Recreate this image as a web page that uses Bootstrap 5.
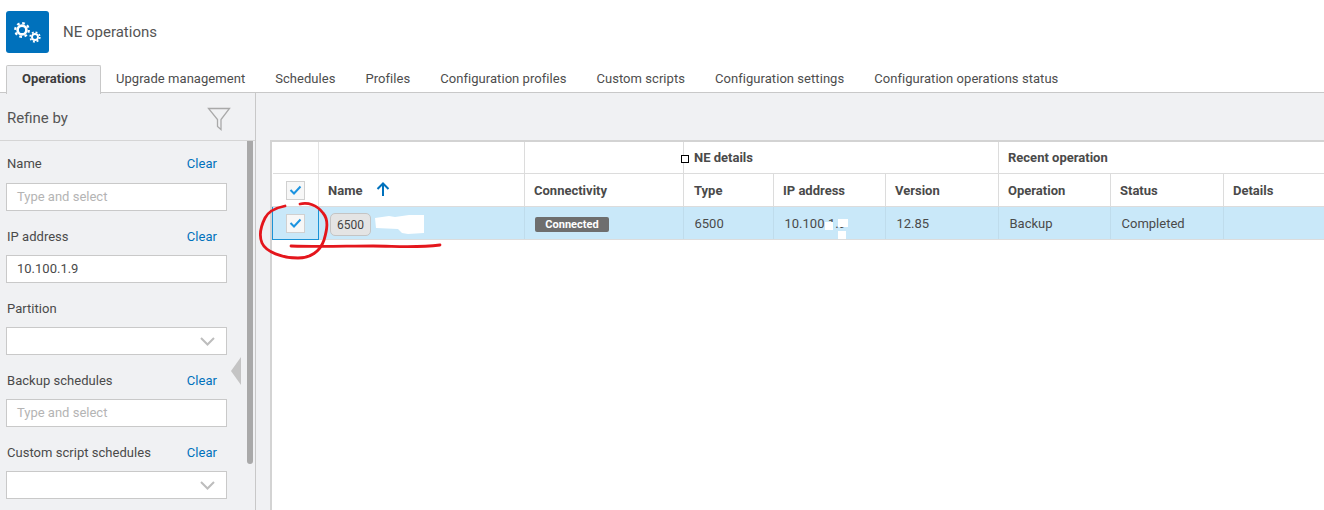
<!DOCTYPE html>
<html lang="en"><head><meta charset="utf-8"><title>NE operations</title>
<link href="https://cdn.jsdelivr.net/npm/bootstrap@5.3.0/dist/css/bootstrap.min.css" rel="stylesheet">
<style>
html,body{height:510px;overflow:hidden}
body{font-family:Roboto,"Liberation Sans",sans-serif;font-size:13px;color:#4a4a4a;background:#fff;position:relative}
.app-head{height:65px;padding:0 6px}
.app-logo{width:43px;height:42px;margin-bottom:1px;background:#0071bc;border-radius:3px}
.app-title{font-size:15px;margin-left:14px;color:#555}
.app-tabs{height:28px;border-bottom:1px solid #c8c8c8;padding-left:6px}
.app-tabs .nav-link{padding:0 14px;height:28px;line-height:25px;color:#4d4d4d;font-size:13px;border:1px solid transparent;border-bottom:0;border-radius:2px 2px 0 0;margin:0;letter-spacing:.05px;background:none}
.app-tabs .nav-link.active{font-weight:700;color:#3c3c3c;background:#f0f1f3;border-color:#c8c8c8;height:29px;padding:0 14px 0 15px;letter-spacing:0}
.app-body{height:417px;background:#f0f1f3}
.side{width:256px;border-right:1px solid #c8c8c8;position:relative;height:417px;overflow:hidden}
.side-head{height:48px;border-bottom:1px solid #d5d5d5;padding:4px 24px 0 7px;font-size:15px;color:#555}
.fgroup{padding:0 28px 0 6px;height:72px}
.fgroup-top{height:30px;padding-left:1px;padding-top:2px;letter-spacing:.03px}
.fgroup a{color:#0071bc;text-decoration:none;margin-right:10px}
.fgroup-first .fgroup-top{padding-top:1px}
.fbox{height:28px;background:#fff;border:1px solid #c9c9c9;padding:0 10px;line-height:26px;color:#4a4a4a;display:flex;align-items:center;justify-content:space-between}
.fbox.ph{color:#b4b4b4}
.fbox svg{margin-right:1px}
.side-list{padding-top:12px}
.side-scroll{position:absolute;left:247px;top:48px;width:6px;height:323px;background:#a9a9a9;border-radius:0 0 3px 3px}
.side-tri{position:absolute;left:231px;top:264px;width:0;height:0;border-style:solid;border-width:14px 10px 14px 0;border-color:transparent #c4c4c4 transparent transparent}
.main{padding:47px 0 0 15px;overflow:hidden}
.grid-wrap{background:#fff;height:370px;border-left:2px solid #d3d3d3;border-top:2px solid #d3d3d3;overflow:hidden;margin-left:-1px}
.ne-table{table-layout:fixed;width:1060px;margin:0;border-collapse:collapse;color:#4a4a4a;font-size:13px}
.ne-table col:nth-child(1){width:46px}.ne-table col:nth-child(2){width:206px}.ne-table col:nth-child(3){width:159px}.ne-table col:nth-child(4){width:90px}.ne-table col:nth-child(5){width:112px}.ne-table col:nth-child(6){width:113px}.ne-table col:nth-child(7){width:112px}.ne-table col:nth-child(8){width:113px}.ne-table col:nth-child(9){width:109px}
.ne-table td,.ne-table th{padding:2px 0 0 9px;border:0;border-right:1px solid #dcdcdc;border-bottom:1px solid #dcdcdc;background:transparent;vertical-align:middle;height:33px;white-space:nowrap;font-weight:700;color:#4a4a4a}
.ne-table th.cfirst{padding-left:10px}
.ne-table thead tr:first-child th{height:31px;padding-top:0}
.ne-table tbody td{font-weight:400;background:#c9e8f9;border-right-color:#bfdcec;border-bottom-color:#dcdcdc;padding-left:10.5px}
.ne-table .cchk,.ne-table tbody .cchk{padding:0;text-align:center;border-right-color:#e3e3e3}
.ne-table tbody .cchk{border:1px solid #1c93d6}
.ne-table tbody .csep{border-left:1px solid #7a8a96}
.chk{display:inline-flex;width:19px;height:19px;background:#f7f7f7;border:1px solid #d0d0d0;align-items:center;justify-content:center;vertical-align:middle}
.ne-chip{display:inline-block;background:#e4e4e4;border:1px solid #c4c4c4;border-radius:5px;height:23px;line-height:22px;width:41px;text-align:center;font-size:12px;margin-left:.5px;margin-top:2px;color:#444}
.ne-status{display:inline-block;background:#6e6e6e;color:#fff;font-weight:700;font-size:11px;height:15px;line-height:15px;width:74px;margin-left:-.5px;text-align:center;border-radius:2px}
.arrow-up{margin-left:10px;vertical-align:-1px}
.sq-mark{position:absolute;left:681px;top:155px;width:8px;height:8px;border:1px solid #000;background:#fff}
.mask{position:absolute;background:#fff}
.mask-a{left:825px;top:222px;width:8px;height:8px}
.mask-b{left:838px;top:219px;width:10px;height:8px}
.mask-c{left:838px;top:231px;width:8px;height:8px}
.ink{position:absolute;left:0;top:0;pointer-events:none}
</style></head><body>
<div class="app-head d-flex align-items-center">
 <div class="app-logo d-flex align-items-center justify-content-center flex-shrink-0">
  <svg width="43" height="42" viewBox="0 0 43 42" fill="none" stroke="#fff"><circle cx="16" cy="19" r="4.4" stroke-width="2.6"/><circle cx="16" cy="19" r="6.8" stroke-width="2.2" stroke-dasharray="2.67 2.67"/><circle cx="29" cy="26" r="3" stroke-width="1.9"/><circle cx="29" cy="26" r="4.8" stroke-width="1.7" stroke-dasharray="1.88 1.89"/></svg>
 </div>
 <div class="app-title">NE operations</div>
</div>
<ul class="nav app-tabs">
 <li class="nav-item"><a class="nav-link active" href="#">Operations</a></li>
 <li class="nav-item"><a class="nav-link" href="#">Upgrade management</a></li>
 <li class="nav-item"><a class="nav-link" href="#">Schedules</a></li>
 <li class="nav-item"><a class="nav-link" href="#">Profiles</a></li>
 <li class="nav-item"><a class="nav-link" href="#">Configuration profiles</a></li>
 <li class="nav-item"><a class="nav-link" href="#">Custom scripts</a></li>
 <li class="nav-item"><a class="nav-link" href="#">Configuration settings</a></li>
 <li class="nav-item"><a class="nav-link" href="#">Configuration operations status</a></li>
</ul>
<div class="app-body d-flex">
 <aside class="side flex-shrink-0">
  <div class="side-head d-flex align-items-center justify-content-between">
   <span>Refine by</span>
   <svg width="24" height="24" viewBox="0 0 24 24" fill="none" stroke="#a9a9a9" stroke-width="1.3"><path d="M1.5 1.5h21L14 12.5v10l-3.5-3v-7z"/></svg>
  </div>
  <div class="side-list">
   <div class="fgroup fgroup-first"><div class="fgroup-top d-flex justify-content-between"><span>Name</span><a href="#">Clear</a></div><div class="fbox ph">Type and select</div></div>
   <div class="fgroup"><div class="fgroup-top d-flex justify-content-between"><span>IP address</span><a href="#">Clear</a></div><div class="fbox">10.100.1.9</div></div>
   <div class="fgroup"><div class="fgroup-top"><span>Partition</span></div><div class="fbox"><span></span><svg width="15" height="9" viewBox="0 0 15 9" fill="none" stroke="#bdbdbd" stroke-width="2"><path d="M1 1l6.5 6.5L14 1"/></svg></div></div>
   <div class="fgroup"><div class="fgroup-top d-flex justify-content-between"><span>Backup schedules</span><a href="#">Clear</a></div><div class="fbox ph">Type and select</div></div>
   <div class="fgroup"><div class="fgroup-top d-flex justify-content-between"><span>Custom script schedules</span><a href="#">Clear</a></div><div class="fbox"><span></span><svg width="15" height="9" viewBox="0 0 15 9" fill="none" stroke="#bdbdbd" stroke-width="2"><path d="M1 1l6.5 6.5L14 1"/></svg></div></div>
  </div>
  <div class="side-scroll"></div>
  <div class="side-tri"></div>
 </aside>
 <main class="main flex-grow-1">
  <div class="grid-wrap">
   <table class="table ne-table">
    <colgroup><col><col><col><col><col><col><col><col><col></colgroup>
    <thead>
     <tr><th class="cchk"></th><th></th><th></th><th class="cfirst" colspan="3">NE details</th><th colspan="3">Recent operation</th></tr>
     <tr><th class="cchk"><span class="chk"><svg width="13" height="10" viewBox="0 0 13 10" fill="none" stroke="#1c93e0" stroke-width="2"><path d="M1.5 5l3.5 3.5L11.5 1.5"/></svg></span></th>
      <th>Name <svg class="arrow-up" width="14" height="14" viewBox="0 0 14 14" fill="none" stroke="#0071bc" stroke-width="2"><path d="M7 14V2M1.5 7L7 1.5 12.5 7"/></svg></th>
      <th>Connectivity</th><th class="cfirst">Type</th><th>IP address</th><th>Version</th><th>Operation</th><th>Status</th><th>Details</th></tr>
    </thead>
    <tbody>
     <tr><td class="cchk"><span class="chk"><svg width="13" height="10" viewBox="0 0 13 10" fill="none" stroke="#1c93e0" stroke-width="2"><path d="M1.5 5l3.5 3.5L11.5 1.5"/></svg></span></td>
      <td><span class="ne-chip">6500</span></td>
      <td><span class="ne-status">Connected</span></td>
      <td class="csep">6500</td><td>10.100.1.9</td><td>12.85</td><td>Backup</td><td>Completed</td><td></td></tr>
    </tbody>
   </table>
  </div>
 </main>
</div>
<div class="sq-mark"></div>
<div class="mask mask-a"></div><div class="mask mask-b"></div><div class="mask mask-c"></div>
<svg class="ink" width="1324" height="510" viewBox="0 0 1324 510" fill="none" stroke-linecap="round"><path fill="#fff" d="M375 218l14-2 6 1 14-2 15 0v18l-16 1-6-1-4-4-22-1z"/><path stroke="#e4161c" stroke-width="2.8" d="M291 246c30 1 55 0 82 0 22 0 42 2 67-1"/><path stroke="#e4161c" stroke-width="2.8" d="M285 206C275 208 268 212 265 218C261 226 259 236 262 243C266 252 282 258 298 258C310 258 320 252 324 240C327 230 329 220 323 213C317 205 308 202 300 204"/></svg>
<script src="https://cdn.jsdelivr.net/npm/bootstrap@5.3.0/dist/js/bootstrap.bundle.min.js"></script>
</body></html>
